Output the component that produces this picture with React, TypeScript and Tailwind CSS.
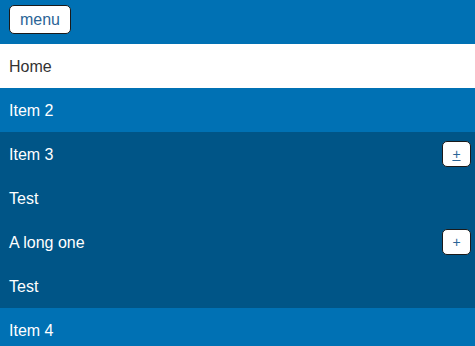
import React from "react";

const font = { fontFamily: '"Liberation Sans", Arial, sans-serif' };

function PlusBtn({ underline }: { underline?: boolean }) {
  return (
    <span
      className={`flex h-[26px] w-[29px] items-center justify-center rounded-[5px] border border-[#1a1a1a] bg-white text-[14px] text-[#2a6496] ${underline ? "underline" : ""}`}
    >
      +
    </span>
  );
}

function Row({ label, cls, plus, underline }: { label: string; cls: string; plus?: boolean; underline?: boolean }) {
  return (
    <div className={`flex h-[44px] items-center justify-between pl-[9px] pr-[4px] text-[16px] ${cls}`}>
      <span className="pt-[2px]">{label}</span>
      {plus && <PlusBtn underline={underline} />}
    </div>
  );
}

export default function App() {
  return (
    <div className="w-[475px] h-[346px] overflow-hidden bg-[#0071b4]" style={font}>
      <div className="flex h-[44px] items-start bg-[#0071b4] pl-[9px] pt-[5px]">
        <span className="flex h-[29px] w-[62px] items-center justify-center rounded-[5px] border border-[#1a1a1a] bg-white text-[16px] text-[#2a6496]">
          menu
        </span>
      </div>
      <Row label="Home" cls="bg-white text-[#333333]" />
      <Row label="Item 2" cls="bg-[#0071b4] text-white" />
      <Row label="Item 3" cls="bg-[#005587] text-white" plus underline />
      <Row label="Test" cls="bg-[#005587] text-white" />
      <Row label="A long one" cls="bg-[#005587] text-white" plus />
      <Row label="Test" cls="bg-[#005587] text-white" />
      <Row label="Item 4" cls="bg-[#0071b4] text-white" />
    </div>
  );
}
